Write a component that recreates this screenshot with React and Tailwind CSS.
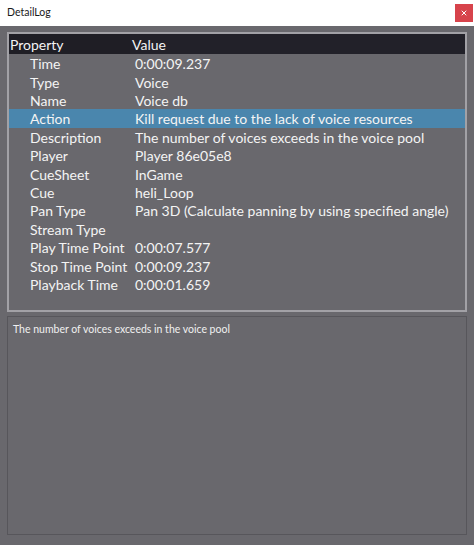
import { X } from 'lucide-react';

const rows = [
  ['Time', '0:00:09.237'],
  ['Type', 'Voice'],
  ['Name', 'Voice db'],
  ['Action', 'Kill request due to the lack of voice resources'],
  ['Description', 'The number of voices exceeds in the voice pool'],
  ['Player', 'Player 86e05e8'],
  ['CueSheet', 'InGame'],
  ['Cue', 'heli_Loop'],
  ['Pan Type', 'Pan 3D (Calculate panning by using specified angle)'],
  ['Stream Type', ''],
  ['Play Time Point', '0:00:07.577'],
  ['Stop Time Point', '0:00:09.237'],
  ['Playback Time', '0:00:01.659'],
];

const App = () => {
  const selected = 'Action';

  return (
    <div className="w-[474px] h-[545px] flex flex-col bg-[#69686d] font-['Lato','Liberation_Sans',sans-serif] text-[#f4f4f4]">
      {/* Title bar */}
      <div className="h-[26px] bg-white flex items-center justify-between pl-[7px] pr-[1px] shrink-0">
        <span className="text-[10.5px] text-[#1a1a1a]">DetailLog</span>
        <button className="w-[18px] h-[18px] bg-[#d7434b] flex items-center justify-center">
          <X className="w-[8px] h-[8px] text-white" strokeWidth={3} />
        </button>
      </div>

      <div className="flex-1 flex flex-col px-[7px] pt-[6px] pb-[10px] gap-[4px]">
        {/* Property grid */}
        <div className="h-[280px] border-[2px] border-[#a2a1a6] flex flex-col shrink-0">
          <div className="h-[20px] flex items-center bg-[#1f1e25] text-[14px] shrink-0">
            <div className="w-[121px] pl-[1px]">Property</div>
            <div className="flex-1 pl-[2px] bg-[#222129] h-full flex items-center">Value</div>
          </div>
          {rows.map(([name, value]) => (
            <div
              key={name}
              className={`h-[18.42px] pt-[1px] flex items-center text-[14px] whitespace-nowrap ${
                name === selected ? 'bg-[#4a86ad]' : ''
              }`}
            >
              <div className="w-[121px] pl-[21px]">{name}</div>
              <div className="flex-1 pl-[5px]">{value}</div>
            </div>
          ))}
        </div>

        {/* Description box */}
        <div className="flex-1 border border-[#57565b] px-[5px] py-[5px]">
          <p className="text-[10.5px] leading-[14px] text-[#f0f0f0]">
            The number of voices exceeds in the voice pool
          </p>
        </div>
      </div>
    </div>
  );
};

export default App;
